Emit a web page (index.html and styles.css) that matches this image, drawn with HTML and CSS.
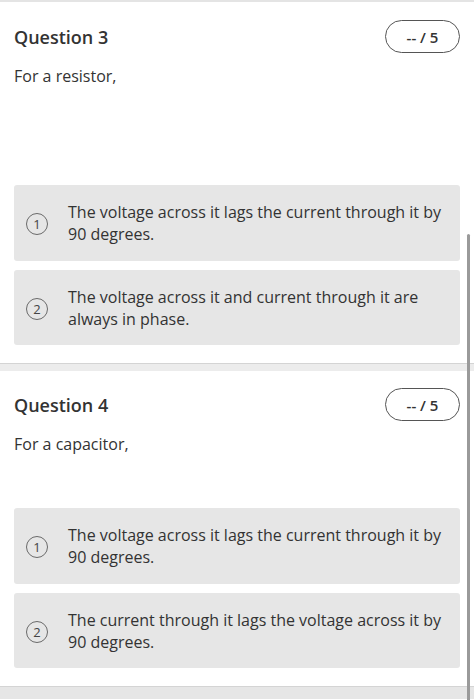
FILE: index.html
```html
<!DOCTYPE html>
<html lang="en">
<head>
<meta charset="utf-8">
<title>Quiz</title>
<link rel="stylesheet" href="styles.css">
</head>
<body>
<div class="page">
  <div class="top-band"></div>
  <section class="question">
    <div class="q-head">
      <h2 class="q-title">Question 3</h2>
      <span class="badge">-- / 5</span>
    </div>
    <p class="stem stem-tall">For a resistor,</p>
    <ol class="options">
      <li class="option"><span class="num">1</span><span class="opt-text">The voltage across it lags the current through it by 90 degrees.</span></li>
      <li class="option"><span class="num">2</span><span class="opt-text">The voltage across it and current through it are always in phase.</span></li>
    </ol>
  </section>
  <div class="divider"></div>
  <section class="question q-second">
    <div class="q-head">
      <h2 class="q-title">Question 4</h2>
      <span class="badge">-- / 5</span>
    </div>
    <p class="stem">For a capacitor,</p>
    <ol class="options">
      <li class="option"><span class="num">1</span><span class="opt-text">The voltage across it lags the current through it by 90 degrees.</span></li>
      <li class="option"><span class="num">2</span><span class="opt-text">The current through it lags the voltage across it by 90 degrees.</span></li>
    </ol>
  </section>
  <div class="bottom-band"></div>
  <div class="scrollbar"></div>
</div>
</body>
</html>
```
FILE: styles.css
```css
html, body {
  margin: 0;
  padding: 0;
  background: #ffffff;
}
body {
  font-family: "Open Sans", "Noto Sans", sans-serif;
  color: #333333;
  overflow: hidden;
}
.page {
  position: relative;
  width: 474px;
  height: 700px;
  overflow: hidden;
}
.top-band {
  height: 2px;
  background: #e4e4e4;
}
.question {
  padding: 18px 14px 18px 14px;
}
.q-second {
  padding-top: 17px;
}
.q-head {
  display: flex;
  align-items: center;
  justify-content: space-between;
  height: 33px;
}
.q-title {
  margin: 0;
  font-size: 18px;
  font-weight: 600;
  color: #333333;
  line-height: 24px;
}
.badge {
  box-sizing: border-box;
  width: 75px;
  height: 33px;
  border: 1px solid #555555;
  border-radius: 17px;
  display: flex;
  align-items: center;
  justify-content: center;
  font-size: 15px;
  font-weight: 600;
  color: #333333;
}
.stem {
  margin: 12px 0 53px 0;
  font-size: 16px;
  line-height: 22px;
  color: #333333;
}
.stem-tall {
  margin-bottom: 98px;
}
.options {
  list-style: none;
  margin: 0;
  padding: 0;
  display: flex;
  flex-direction: column;
  gap: 9px;
}
.option {
  display: flex;
  align-items: center;
  background: #e6e6e6;
  border-radius: 3px;
  padding: 16px 14px 15.5px 12px;
}
.num {
  box-sizing: border-box;
  flex: none;
  width: 22px;
  height: 22px;
  border: 1px solid #6a6a6a;
  border-radius: 50%;
  display: flex;
  align-items: center;
  justify-content: center;
  font-size: 13px;
  color: #444444;
  margin-right: 20px;
  margin-top: 2px;
}
.opt-text {
  font-size: 16px;
  line-height: 22px;
  color: #333333;
}
.divider {
  height: 7px;
  background: #ececec;
  border-top: 1px solid #d4d4d4;
}
.bottom-band {
  height: 12px;
  background: #e6e6e6;
  border-top: 1px solid #d4d4d4;
}
.scrollbar {
  position: absolute;
  left: 467px;
  top: 234px;
  width: 3px;
  height: 470px;
  background: #9a9a9a;
  border-radius: 2px;
}
```
